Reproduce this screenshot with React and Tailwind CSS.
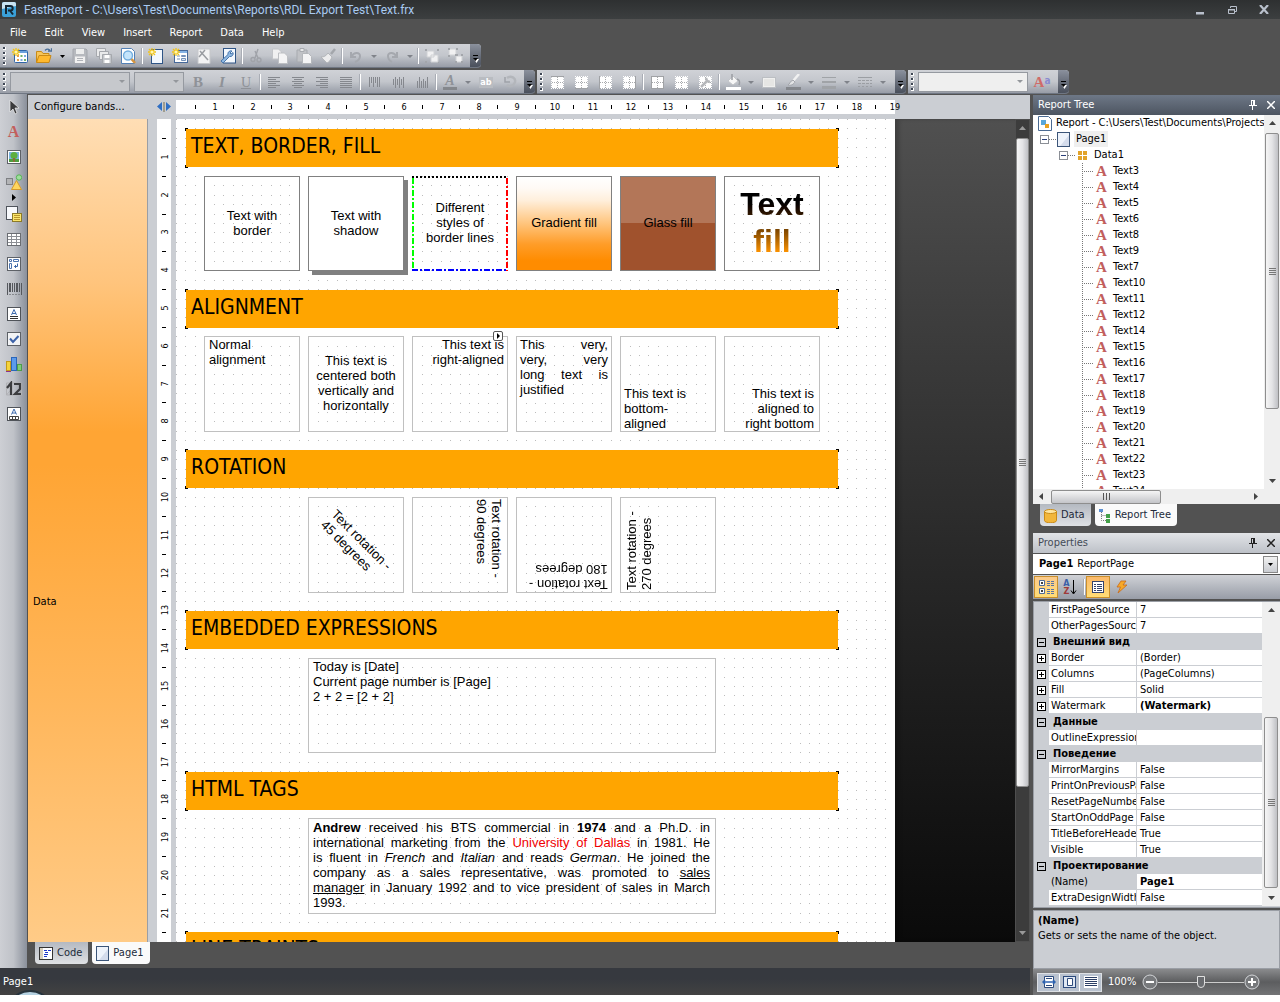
import React from "react";

const UI = "font-['DejaVu_Sans_Condensed','DejaVu_Sans',sans-serif]";

/* ---------- icons ---------- */
function Svg({ w = 16, h = 16, children, ...rest }) {
  return (
    <svg width={w} height={h} viewBox={`0 0 ${w} ${h}`} fill="none" aria-hidden="true" className="block shrink-0" {...rest}>
      {children}
    </svg>
  );
}

const Spark = () => (
  <g>
    <path d="M4 0v8M0 4h8M1 1l6 6M7 1l-6 6" stroke="#f2c419" strokeWidth="1.3" />
    <circle cx="4" cy="4" r="1.6" fill="#fff6b0" />
  </g>
);

const icons = {
  newReport: (
    <Svg>
      <rect x="2.500" y="2.500" width="13" height="12" rx="1" fill="#fff" stroke="#2f65a8" />
      <path d="M3 4h12" stroke="#6ba2dd" strokeWidth="2" />
      <path d="M5 8h2M5 12h2" stroke="#e9a04b" strokeWidth="2" />
      <path d="M8.500 8h2M12 12h2" stroke="#6fb36a" strokeWidth="2" />
      <path d="M12 8h2M8.500 12h2" stroke="#7ea9e0" strokeWidth="2" />
      <Spark />
    </Svg>
  ),
  open: (
    <Svg>
      <path d="M.5 14.500V3.500h5l1.500 2h6v3" fill="#f7c65a" stroke="#c98a16" />
      <path d="M.5 14.500l2.500-7h12l-2 7z" fill="#ffb92e" stroke="#c98a16" />
      <path d="M9 2.500c2-2 4.500-1.500 5 .5m-2 .2h3.500v-3" stroke="#4b6f98" strokeWidth="1.300" />
    </Svg>
  ),
  save: (
    <Svg>
      <path d="M1 1h13l1 1v13H1z" fill="#b6b9be" stroke="#a3a6ac" />
      <rect x="4" y="1" width="8" height="5" fill="#eceded" />
      <rect x="3" y="8.500" width="10" height="6.500" fill="#f1f1f1" />
      <path d="M5 10.500h6M5 12.500h6" stroke="#b0b3b8" />
    </Svg>
  ),
  saveAll: (
    <Svg>
      <path d="M.5.5h9v8h-9z" fill="#e9eaeb" stroke="#a5a8ad" />
      <path d="M3.500 3.500h9v8h-9z" fill="#e9eaeb" stroke="#a5a8ad" />
      <path d="M6.500 6.500h9v9h-9z" fill="#c3c6ca" stroke="#a5a8ad" />
      <path d="M8.500 7h5v3h-5zM8.500 12h5v3h-5z" fill="#fff" />
    </Svg>
  ),
  preview: (
    <Svg>
      <path d="M1.500.5h10l3 3v12h-13z" fill="#fff" stroke="#5380b5" />
      <circle cx="8" cy="7.500" r="4.500" fill="#c4e4fb" stroke="#74aede" strokeWidth="1.400" />
      <path d="M11.500 11l3.500 4" stroke="#d59541" strokeWidth="2.600" />
    </Svg>
  ),
  newPage: (
    <Svg>
      <rect x="3.500" y="1.500" width="11" height="14" fill="#f3f8fe" stroke="#2f5586" />
      <Spark />
    </Svg>
  ),
  newDialog: (
    <Svg>
      <rect x="2.500" y="2.500" width="13" height="12" fill="#fff" stroke="#46699a" />
      <path d="M3 4h12" stroke="#86b4e6" strokeWidth="2" />
      <path d="M5 8h3M5 11h3" stroke="#7592ba" />
      <path d="M9.500 7.500h4v1h-4zM9.500 10.500h4v2h-4z" fill="#dfe9f6" stroke="#7592ba" />
      <Spark />
    </Svg>
  ),
  deletePage: (
    <Svg>
      <path d="M2 1h12v14.500H2z" fill="#f3f3f4" stroke="#c5c7ca" />
      <path d="M4 3l8 9M9 2L3 9" stroke="#9a9da2" strokeWidth="1.500" />
    </Svg>
  ),
  pageSettings: (
    <Svg>
      <rect x="3.500" y=".5" width="12" height="14.500" fill="#f3f8fe" stroke="#2f5586" />
      <path d="M12 3a3 3 0 0 0-4 3.500L1 13l2 2 6.500-6.500A3 3 0 0 0 13 4.500l-2 1.500-1-1z" fill="#8fb8e2" stroke="#4a78ad" />
    </Svg>
  ),
  cut: (
    <Svg>
      <path d="M10 1L7 10M7 3l3 7" stroke="#a0a3a9" strokeWidth="1.400" />
      <circle cx="5" cy="11.500" r="2" stroke="#a0a3a9" strokeWidth="1.400" />
      <circle cx="11" cy="12" r="2" stroke="#a0a3a9" strokeWidth="1.400" />
    </Svg>
  ),
  copy: (
    <Svg>
      <path d="M.5 1h6l3 3v7h-9z" fill="#f0f0f1" stroke="#c2c4c8" />
      <path d="M6.500 5h6l3 3v7.500h-9z" fill="#f4f4f5" stroke="#bdbfc3" />
    </Svg>
  ),
  paste: (
    <Svg>
      <path d="M1 2h10v12H1z" fill="#c0c2c6" stroke="#a7aaaf" />
      <path d="M4 .5h4v3H4z" fill="#e6e7e8" stroke="#a7aaaf" />
      <path d="M6.500 5.500h6l3 3v7h-9z" fill="#f4f4f5" stroke="#b4b7bb" />
    </Svg>
  ),
  brush: (
    <Svg>
      <path d="M15 1l-4 5" stroke="#a3a6ab" strokeWidth="2.500" />
      <path d="M1 9c3 0 5-1 7-4l4 4c-1 3-3 5-5 6z" fill="#ececed" stroke="#b2b5b9" />
    </Svg>
  ),
  undo: (
    <Svg>
      <path d="M3 4v5h5M3.500 8.500C6 4 12 4 12 8c0 3-2 5-5 6" stroke="#a5a8ae" strokeWidth="2" />
    </Svg>
  ),
  redo: (
    <Svg>
      <path d="M13 4v5H8M12.500 8.500C10 4 4 4 4 8c0 3 2 5 4 6" stroke="#a5a8ae" strokeWidth="2" />
    </Svg>
  ),
  group: (
    <Svg>
      <path d="M1 2h2M13 2h2M1 14h2M13 14h2" stroke="#a3a6ab" strokeWidth="2" />
      <path d="M3 3h7v6H3zM7 7h7v7H7z" fill="#f1f1f2" stroke="#cfd1d4" />
    </Svg>
  ),
  ungroup: (
    <Svg>
      <path d="M1 1h7v6H1zM8 8h6v6H8z" fill="#f1f1f2" stroke="#cfd1d4" />
      <path d="M0 1h2M8 1h2M0 8h2M7 7h3M13 7h2M7 14h2M13 14h2" stroke="#a3a6ab" strokeWidth="2" />
    </Svg>
  ),
  rotate: (
    <Svg>
      <path d="M5 4c4-3 9 0 8 4s-5 5-8 3" stroke="#b3b6bb" strokeWidth="2.500" />
      <path d="M3 3v5h5" stroke="#9fa2a8" strokeWidth="1.500" />
    </Svg>
  ),
  bucket: (
    <Svg>
      <path d="M3 7l5-5 5 5-5 4z" fill="#f6f6f6" stroke="#c2c4c8" />
      <path d="M7 0v6M12 5c3 1 3 3 2 6" stroke="#9a9da2" strokeWidth="1.500" />
      <path d="M1 13h15v3H1z" fill="#fff" />
    </Svg>
  ),
  fillBox: (
    <Svg>
      <rect x="1.500" y="3.500" width="13" height="10" fill="#f0f0ef" stroke="#bcbfc3" />
      <path d="M3 5h10v7H3z" fill="#e6e6e4" />
    </Svg>
  ),
  pen: (
    <Svg>
      <path d="M14 0L8 7" stroke="#f1f1f1" strokeWidth="2.500" />
      <path d="M8 6l2 2c-1 2-4 4-7 3 2-1 2-4 5-5z" fill="#e2e3e5" stroke="#a3a6ab" />
      <path d="M1 13h15v3H1z" fill="#84878c" />
    </Svg>
  ),
  lineWidth: (
    <Svg shapeRendering="crispEdges">
      <path d="M1 3h14v1H1zM1 7h14v2H1zM1 12h14v3H1z" fill="#a0a3a7" />
    </Svg>
  ),
  lineStyle: (
    <Svg shapeRendering="crispEdges">
      <path d="M1 3.500h14" stroke="#9b9ea3" />
      <path d="M1 6.500h14M1 9.500h14" stroke="#9b9ea3" strokeDasharray="3 1" />
      <path d="M1 12.500h14" stroke="#9b9ea3" strokeDasharray="2 2" />
    </Svg>
  ),
};

function LinesIcon({ rows, vertical }) {
  return (
    <Svg shapeRendering="crispEdges">
      {rows.map(([a, b], i) =>
        vertical ? (
          <rect key={i} x={3 + i * 2} y={a} width="1" height={b - a} fill="#85888e" />
        ) : (
          <rect key={i} x={a} y={3 + i * 2} width={b - a} height="1" fill="#85888e" />
        )
      )}
    </Svg>
  );
}

function BorderIcon({ edge, tool }) {
  return (
    <Svg shapeRendering="crispEdges">
      <rect x="3" y="3" width="11" height="11" fill="#fff" />
      <path d="M2 2.500h13M2 14.500h13M2.500 2v13M14.500 2v13" stroke="#fff" strokeDasharray="1 1" />
      <path d="M3 8.500h11M8.500 3v11" stroke="#a9abae" strokeDasharray="1 1" />
      {edge === "top" && <path d="M2 2.500h13" stroke="#a0a2a5" />}
      {edge === "bottom" && <path d="M2 14.500h13" stroke="#a0a2a5" />}
      {edge === "left" && <path d="M2.500 2v13" stroke="#a0a2a5" />}
      {edge === "right" && <path d="M14.500 2v13" stroke="#a0a2a5" />}
      {edge === "all" && <path d="M2.500 2.500h12v12h-12z" stroke="#a0a2a5" />}
      {tool && <path d="M4 13l6-6M9 4l1 3 3 1" stroke="#b5b7ba" strokeWidth="2.500" shapeRendering="auto" />}
    </Svg>
  );
}

const RedA = ({ size = "text-[16px]" }) => (
  <span aria-hidden="true" className={`${size} font-['Liberation_Serif',serif] font-bold leading-4 text-[#c25f5d]`}>A</span>
);

const toolIcons = [
  ["Select", (
    <Svg><path d="M4 1v12l3-3 2 5 2-1-2-5h4z" fill="#3a3a3c" stroke="#f1f1f1" strokeWidth=".7" /></Svg>
  )],
  ["Text", <RedA key="a" />],
  ["Picture", (
    <Svg>
      <rect x="1.500" y="1.500" width="13" height="13" fill="#fff" stroke="#5d6167" />
      <rect x="3" y="3" width="10" height="10" fill="#7bb3e0" />
      <path d="M3 10h10v3H3z" fill="#4f9d3c" />
      <circle cx="8" cy="6.500" r="3.500" fill="#5dae3f" />
      <path d="M7 9h2v4H7z" fill="#8b6b3a" />
    </Svg>
  )],
  ["Shapes", (
    <Svg>
      <rect x=".5" y="4.500" width="6" height="6" fill="#b3b4b6" stroke="#7d7f83" />
      <circle cx="13" cy="3.500" r="2.700" fill="#9fdf9d" stroke="#57b356" />
      <path d="M10.500 6.500l5 9H5.500z" fill="#ffd65e" stroke="#d59a2a" />
    </Svg>
  )],
  null,
  ["Subreport", (
    <Svg>
      <rect x=".5" y=".5" width="11" height="13" fill="#f7f9fc" stroke="#4f545c" />
      <rect x="6.500" y="7.500" width="9" height="8" fill="#fbe66b" stroke="#8c7a28" />
      <path d="M8 9.500h6M8 11.500h6M8 13.500h6" stroke="#b9962c" />
    </Svg>
  )],
  ["Table", (
    <Svg shapeRendering="crispEdges">
      <rect x="1.500" y="2.500" width="13" height="12" fill="#fff" stroke="#6a6d72" />
      <path d="M2 5.500h12M2 8.500h12M2 11.500h12M5.500 3v11M10.500 3v11" stroke="#8c8f94" />
    </Svg>
  )],
  ["Matrix", (
    <Svg>
      <rect x="1.500" y="1.500" width="13" height="13" fill="#fff" stroke="#5d6167" />
      <path d="M3.500 3.500h2v2h-2zM7.500 3.500h5v2h-5zM3.500 7.500h2v5h-2z" stroke="#4d74ae" />
      <path d="M11.500 7.500v3h-3m0 0l1.500-1.500m-1.500 1.500l1.500 1.500" stroke="#3b66a6" />
    </Svg>
  )],
  ["Barcode", (
    <Svg shapeRendering="crispEdges">
      <path d="M1 2h1v12H1zM3 2h2v9H3zM6 2h1v9H6zM8 2h1v9H8zM10 2h2v9h-2zM13 2h1v9h-1zM15 2h1v12h-1z" fill="#55585d" />
      <path d="M3 13h11" stroke="#85888d" strokeDasharray="2 1" />
    </Svg>
  )],
  ["Rich text", (
    <Svg>
      <rect x="1.500" y="1.500" width="13" height="13" fill="#fff" stroke="#4f5359" />
      <path d="M5.500 9L8 3.500 10.500 9M6 7.500h4" stroke="#3f6cae" />
      <path d="M4 10.500h8M4 12.500h8" stroke="#333" />
    </Svg>
  )],
  ["Check box", (
    <Svg>
      <rect x="1.500" y="1.500" width="13" height="13" fill="#f2f3f5" stroke="#5d6167" />
      <path d="M4 7.500l3 3.500 5.500-6" stroke="#3c62a8" strokeWidth="2" />
    </Svg>
  )],
  ["Chart", (
    <Svg>
      <rect x=".5" y="5.500" width="4" height="9" fill="#f4d33c" stroke="#c39a18" />
      <rect x="5.500" y="1.500" width="5" height="13" fill="#5c9bea" stroke="#2a66bb" />
      <rect x="11.500" y="8.500" width="4" height="6" fill="#7fcc78" stroke="#4d9e49" />
      <path d="M0 15.500h5" stroke="#8f2f8f" />
    </Svg>
  )],
  ["Zip code", (
    <Svg>
      <path d="M.5 2h15v12H.5zM.5 14l5-6M9 2l6 6" stroke="#b0b1b5" />
      <path d="M1 7l4-5v12M8 3h6v5l-5 5h6" stroke="#3c3d40" strokeWidth="2.200" />
    </Svg>
  )],
  ["Cellular text", (
    <Svg>
      <rect x="1.500" y="1.500" width="13" height="13" fill="#fff" stroke="#4f5359" />
      <path d="M5.500 8.500L8 3l2.500 5.500M6 7h4" stroke="#3f6cae" />
      <path d="M3.500 10.500h9v3h-9zM6.500 10.500v3M9.500 10.500v3" stroke="#444" />
    </Svg>
  )],
];

/* ---------- toolbar parts ---------- */
const Tool = ({ label, children }) => (
  <button type="button" aria-label={label} className="flex h-6 w-6 shrink-0 items-center justify-center">{children}</button>
);
const Drop = ({ label, dark }) => (
  <button type="button" aria-label={label} className="flex h-6 w-3 shrink-0 items-center justify-center">
    <Svg w={dark ? 5 : 6} h={3}><path d={dark ? "M0 0h5L2.500 3z" : "M0 0h6L3 3z"} fill={dark ? "#000" : "#80838a"} /></Svg>
  </button>
);
const Sep = () => (
  <span className="flex h-6 w-1 shrink-0 items-center justify-center">
    <span className="h-4 w-px bg-[#a9adb5]" />
    <span className="h-4 w-px bg-white" />
  </span>
);
const Grip = () => (
  <span className="flex h-6 w-2 shrink-0 flex-col items-center justify-center gap-0.5">
    {[0, 1, 2, 3].map((i) => (
      <span key={i} className="h-[3px] w-[3px] border-b border-r border-white bg-[#3e4654]" />
    ))}
  </span>
);
function Bar({ children, label, tail = "ml-0.5" }) {
  return (
    <div role="toolbar" aria-label={label} className="flex h-6 shrink-0 overflow-hidden rounded-r border-b border-[#6f7682] bg-linear-to-b from-[#d0d2d7] via-[#c3c6cc] to-[#989da7]">
      <Grip />
      {children}
      <button type="button" aria-label={`${label} options`} className={`flex w-[11px] shrink-0 flex-col items-center justify-end gap-0.5 bg-linear-to-b from-[#8b919d] to-[#4a505c] pb-1 ${tail}`}>
        <span className="h-px w-[5px] bg-black" />
        <Svg w={6} h={5}><path d="M1 1h5L3.500 5z" fill="#fff" /><path d="M0 0h5L2.500 3z" fill="#000" /></Svg>
      </button>
    </div>
  );
}
function Combo({ label, width, light }) {
  return (
    <span className={`relative mx-0.5 mt-0.5 block h-5 shrink-0 ${width}`}>
      <select aria-label={label} disabled className={`block h-5 w-full appearance-none border border-[#9599a0] ${light ? "bg-[#efefef]" : "bg-[#c6c8cc]"}`}>
        <option></option>
      </select>
      <span className="pointer-events-none absolute right-[5px] top-2"><Svg w={6} h={3}><path d="M0 0h6L3 3z" fill="#94979c" /></Svg></span>
    </span>
  );
}

/* ---------- rulers and grid ---------- */
const CM = 37.8;
function Ruler({ vertical, count }) {
  const len = vertical ? 815 : 719;
  const items = [];
  for (let i = 0; i <= count; i++) {
    const t = Math.round(i * CM + CM / 2);
    const n = Math.round(i * CM);
    if (t < len)
      items.push(
        vertical ? <path key={`t${i}`} d={`M5 ${t}.5h4`} stroke="#000" /> : <path key={`t${i}`} d={`M${t}.5 5v4`} stroke="#000" />
      );
    if (i > 0)
      items.push(
        <text key={`n${i}`} fontSize="9" fill="#000" textAnchor="middle" transform={vertical ? `translate(11 ${n}) rotate(-90)` : `translate(${n + 1} 10)`}>{i}</text>
      );
  }
  return (
    <svg width={vertical ? 14 : len} height={vertical ? len : 14} className={`block overflow-visible ${UI}`} aria-hidden="true">
      {items}
    </svg>
  );
}
function DotGrid() {
  let d = "";
  for (let r = 0; r < 90; r++)
    for (let c = 0; c < 77; c++) {
      const x = Math.round(c * 9.45);
      if (x < 718) d += `M${x} ${Math.round(r * 9.45)}h1v1h-1z`;
    }
  return (
    <svg width="719" height="850" shapeRendering="crispEdges" className="absolute left-0 top-0 block" aria-hidden="true">
      <path d={d} fill="#bcbcbc" />
    </svg>
  );
}

/* ---------- report page ---------- */
function Band({ top, children }) {
  return (
    <div className={`absolute left-[10px] h-[38px] w-[652px] bg-[#ffa500] ${top}`}>
      <h2 className={`px-[5px] pt-[3px] text-[21px] leading-7 text-black ${UI}`}>{children}</h2>
      <span className="absolute -left-px -top-px h-[3px] w-[3px] border-l border-t border-black" />
      <span className="absolute -right-px -top-px h-[3px] w-[3px] border-r border-t border-black" />
      <span className="absolute -bottom-px -left-px h-[3px] w-[3px] border-b border-l border-black" />
      <span className="absolute -bottom-px -right-px h-[3px] w-[3px] border-b border-r border-black" />
    </div>
  );
}
function Box({ at, dark, className = "", children }) {
  return (
    <div className={`absolute flex w-24 border px-[3px] ${dark ? "h-[95px] border-[#808080]" : "h-24 border-[#c0c0c0]"} ${at} ${className}`}>{children}</div>
  );
}
const J = ({ children }) => <span className="block [text-align-last:justify]">{children}</span>;

function Page() {
  const mid = "items-center justify-center text-center pb-0.5";
  return (
    <div className="relative w-[719px] shrink-0 self-stretch overflow-hidden bg-white font-['Liberation_Sans',sans-serif] text-[13px] leading-[15px] text-black">
      <DotGrid />
      <Band top="top-[10px]">TEXT, BORDER, FILL</Band>
      <Box dark at="left-[28px] top-[57px]" className={mid}>Text with<br />border</Box>
      <Box dark at="left-[132px] top-[57px]" className={`${mid} bg-white shadow-[4px_4px_0_#808080]`}>
        Text with<br />shadow
      </Box>
      <div className={`absolute left-[236px] top-[57px] flex h-[95px] w-24 ${mid}`}>
        <svg width="96" height="96" className="absolute left-0 top-0" aria-hidden="true">
          <path d="M0 0h96" stroke="#000" strokeWidth="4" strokeDasharray="2 2" />
          <path d="M1 2v93" stroke="#0f0" strokeWidth="2" strokeDasharray="6 2 2 2" />
          <path d="M95 2v93" stroke="#f00" strokeWidth="2" strokeDasharray="6 2 2 2" />
          <path d="M0 94h96" stroke="#00f" strokeWidth="2" strokeDasharray="6 2 2 2" />
        </svg>
        <span>Different<br />styles of<br />border lines</span>
      </div>
      <Box dark at="left-[340px] top-[57px]" className={`${mid} bg-[linear-gradient(#fff_0%,#fffaf5_12%,#ffefdc_25%,#ffc884_48%,#ff9d29_72%,#ff8c00_90%)]`}>Gradient fill</Box>
      <Box dark at="left-[444px] top-[57px]" className={`${mid} bg-[linear-gradient(#b37658_49%,#a0522d_49%)]`}>Glass fill</Box>
      <Box dark at="left-[548px] top-[57px]" className={mid}>
        <span className="bg-linear-to-b from-black from-15% to-[#ff9400] to-90% bg-clip-text text-[32px] font-bold leading-[37px] text-transparent">Text<br />fill</span>
      </Box>

      <Band top="top-[171px]">ALIGNMENT</Band>
      <Box at="left-[28px] top-[217px]" className="pl-1">Normal<br />alignment</Box>
      <Box at="left-[132px] top-[217px]" className={mid}>This text is<br />centered both<br />vertically and<br />horizontally</Box>
      <Box at="left-[236px] top-[217px]" className="justify-end text-right">This text is<br />right-aligned</Box>
      <button type="button" aria-label="Smart tag" className="absolute left-[317px] top-[212px] flex h-[10px] w-[10px] items-center justify-center rounded-xs border border-[#555] bg-white">
        <Svg w={3} h={6}><path d="M0 0v6l3-3z" fill="#000" /></Svg>
      </button>
      <Box at="left-[340px] top-[217px]">
        <span className="block w-full"><J>This very,</J><J>very, very</J><J>long text is</J>justified</span>
      </Box>
      <Box at="left-[444px] top-[217px]" className="items-end">This text is<br />bottom-<br />aligned</Box>
      <Box at="left-[548px] top-[217px]" className="items-end justify-end pr-[5px] text-right">This text is<br />aligned to<br />right bottom</Box>

      <Band top="top-[331px]">ROTATION</Band>
      <Box at="left-[132px] top-[378px]" className="items-center justify-center"><span className="rotate-45 whitespace-nowrap">Text rotation -<br />45 degrees</span></Box>
      <Box at="left-[236px] top-[378px]"><span className="w-full whitespace-nowrap pt-px [writing-mode:vertical-rl]">Text rotation -<br />90 degrees</span></Box>
      <Box at="left-[340px] top-[378px]" className="items-end justify-end"><span className="rotate-180 whitespace-nowrap">Text rotation -<br />180 degrees</span></Box>
      <Box at="left-[444px] top-[378px]"><span className="rotate-180 whitespace-nowrap pt-0.5 [writing-mode:vertical-rl]">Text rotation -<br />270 degrees</span></Box>

      <Band top="top-[492px]">EMBEDDED EXPRESSIONS</Band>
      <div className="absolute left-[132px] top-[539px] h-[95px] w-[408px] border border-[#c0c0c0] px-1">
        Today is [Date]<br />Current page number is [Page]<br />2 + 2 = [2 + 2]
      </div>

      <Band top="top-[653px]">HTML TAGS</Band>
      <div className="absolute left-[132px] top-[699px] h-24 w-[408px] border border-[#c0c0c0] px-1 pr-[5px] pt-px">
        <J><b>Andrew</b> received his BTS commercial in <b>1974</b> and a Ph.D. in</J>
        <J>international marketing from the <span className="text-[#f00000]">University of Dallas</span> in 1981. He</J>
        <J>is fluent in <i>French</i> and <i>Italian</i> and reads <i>German</i>. He joined the</J>
        <J>company as a sales representative, was promoted to <u>sales</u></J>
        <J><u>manager</u> in January 1992 and to vice president of sales in March</J>
        1993.
      </div>

      <Band top="top-[813px]">LINE TRAINTS</Band>
    </div>
  );
}

/* ---------- right-hand panels ---------- */
const PinClose = ({ dark }) => {
  const c = dark ? "#222" : "#fff";
  return (
    <span className="ml-auto flex items-center gap-2.5 pr-[5px]">
      <button type="button" aria-label="Pin panel"><Svg w={8} h={10}><path d="M2 .5h4M2.500 0v5M5.500 0v5M4.500 0v5M0 5.500h8M3.500 6v4" stroke={c} /></Svg></button>
      <button type="button" aria-label="Close panel"><Svg w={8} h={8}><path d="M0 0l8 8M8 0L0 8" stroke={c} strokeWidth="1.500" /></Svg></button>
    </span>
  );
};
const Arrow = ({ dir, color = "#444" }) => {
  const d = { up: "M0 4h7L3.500 0z", down: "M0 0h7L3.500 4z", left: "M4 0v7L0 3.500z", right: "M0 0v7l4-3.500z" }[dir];
  const v = dir === "up" || dir === "down";
  return <Svg w={v ? 7 : 4} h={v ? 4 : 7}><path d={d} fill={color} /></Svg>;
};
const VThumb = ({ className }) => (
  <div className={`flex flex-col items-center justify-center gap-px rounded-xs border border-[#8e8e8e] bg-linear-to-r from-[#f5f5f5] via-[#e4e4e6] to-[#bfc0c4] ${className}`}>
    {[0, 1, 2, 3].map((i) => <span key={i} className="h-px w-[7px] bg-[#777]" />)}
  </div>
);
const Minus = () => <Svg w={9} h={9} shapeRendering="crispEdges"><rect x=".5" y=".5" width="8" height="8" fill="#fff" stroke="#8b8f96" /><path d="M2 4.500h5" stroke="#2a3f7a" /></Svg>;
const HDots = ({ w }) => <Svg w={w} h={16} shapeRendering="crispEdges"><path d={`M0 8.500h${w}`} stroke="#777" strokeDasharray="1 1" /></Svg>;
const PageIcon = () => <Svg w={13} h={15}><rect x=".5" y=".5" width="12" height="14" fill="#eef3fb" stroke="#3b5579" /><path d="M4 13L12 3v11H3z" fill="#d4dcec" /></Svg>;

const textNames = ["Text3", "Text4", "Text5", "Text6", "Text8", "Text9", "Text7", "Text10", "Text11", "Text12", "Text14", "Text15", "Text16", "Text17", "Text18", "Text19", "Text20", "Text21", "Text22", "Text23", "Text24"];

function ReportTree() {
  return (
    <section className="flex min-h-0 flex-1 flex-col">
      <header className="flex h-5 shrink-0 items-center bg-linear-to-b from-[#6e7887] to-[#4d5561] pl-[5px] text-white"><h2>Report Tree</h2><PinClose /></header>
      <div className="flex min-h-0 flex-1 bg-white">
        <ul className="min-w-0 flex-1 overflow-hidden whitespace-nowrap leading-4">
          <li className="flex h-4 items-center gap-1 pl-[5px]">
            <Svg w={14} h={15}><path d="M.5.5h10l3 3v11H.5z" fill="#fff" stroke="#4a6a92" /><path d="M3 4h5v5H3z" fill="#5aa7d8" /><path d="M7 8h4v4H7z" fill="#eba21e" /></Svg>
            Report - C:\Users\Test\Documents\Projects
          </li>
          <li className="flex h-4 items-center pl-[7px]"><Minus /><HDots w={8} /><PageIcon /><span className="ml-1 bg-[#efefef] px-0.5">Page1</span></li>
          <li className="flex h-4 items-center pl-[26px]"><Minus /><HDots w={8} />
            <Svg w={12} h={12}><path d="M2 2h4v4H2zM7 2h4v4H7zM2 7h4v4H2zM7 7h4v4H7z" fill="#e2a32a" /></Svg><span className="ml-1.5">Data1</span></li>
          {textNames.map((n) => (
            <li key={n} className="flex h-4 items-center pl-[49px]">
              <Svg w={12} h={16} shapeRendering="crispEdges"><path d="M.5 0v16M0 8.500h12" stroke="#777" strokeDasharray="1 1" /></Svg>
              <span className="ml-0.5 flex w-[11px] justify-center"><RedA size="text-[15px]" /></span>
              <span className="ml-1.5">{n}</span>
            </li>
          ))}
        </ul>
        <div className="flex w-4 shrink-0 flex-col items-center bg-[#efefef] py-1.5">
          <Arrow dir="up" />
          <VThumb className="mt-2 h-[276px] w-3.5" />
          <span className="mt-auto"><Arrow dir="down" /></span>
        </div>
      </div>
      <div className="flex h-[15px] shrink-0 items-center bg-[#efefef] pl-1.5 pr-[22px]">
        <Arrow dir="left" />
        <div className="ml-2 flex h-3.5 w-[110px] items-center justify-center gap-0.5 rounded-xs border border-[#8e8e8e] bg-linear-to-b from-[#f5f5f5] to-[#c4c5c9]">
          {[0, 1, 2].map((i) => <span key={i} className="h-[7px] w-px bg-[#555]" />)}
        </div>
        <span className="ml-auto"><Arrow dir="right" /></span>
      </div>
      <div role="tablist" className="flex h-[29px] shrink-0 items-start gap-1 pl-[7px]">
        <Tab><Svg w={13} h={14}><path d="M.5 2.500v9c0 3 12 3 12 0v-9z" fill="#f2b63a" stroke="#c98a16" /><ellipse cx="6.500" cy="2.500" rx="6" ry="2" fill="#ffe6a0" stroke="#c98a16" /></Svg>Data</Tab>
        <Tab active><Svg w={12} h={15}><path d="M2.500 4v8.500H7M2.500 7.500H7" stroke="#777" strokeDasharray="1 1" /><path d="M0 1h4v3H0z" fill="#5b8fd0" /><path d="M7 6h4v4H7zM7 11h4v4H7z" fill="#43a047" /></Svg>Report Tree</Tab>
      </div>
    </section>
  );
}
function Tab({ active, children }) {
  return (
    <button type="button" role="tab" aria-selected={!!active} className={`flex h-[22px] items-center gap-1 rounded-b-sm pl-1 pr-1.5 pt-px text-[#222a3a] ${active ? "bg-[#fafafa]" : "bg-linear-to-b from-[#b4b9c1] to-[#dfe1e4]"}`}>{children}</button>
  );
}

const props = [
  ["p", "FirstPageSource", "7"], ["p", "OtherPagesSource", "7"],
  ["c", "Внешний вид"],
  ["+", "Border", "(Border)"], ["+", "Columns", "(PageColumns)"], ["+", "Fill", "Solid"], ["+", "Watermark", "(Watermark)", true],
  ["c", "Данные"], ["p", "OutlineExpression", ""],
  ["c", "Поведение"],
  ["p", "MirrorMargins", "False"], ["p", "PrintOnPreviousPage", "False"], ["p", "ResetPageNumber", "False"],
  ["p", "StartOnOddPage", "False"], ["p", "TitleBeforeHeader", "True"], ["p", "Visible", "True"],
  ["c", "Проектирование"],
  ["s", "(Name)", "Page1", true], ["p", "ExtraDesignWidth", "False"],
];
const Sign = ({ plus }) => (
  <Svg w={9} h={9} shapeRendering="crispEdges"><rect x=".5" y=".5" width="8" height="8" stroke="#000" fill={plus ? "#fff" : "none"} /><path d={plus ? "M2 4.500h5M4.500 2v5" : "M2 4.500h5"} stroke="#000" /></Svg>
);

function Properties() {
  return (
    <section className="flex shrink-0 flex-col">
      <header className="flex h-5 items-center bg-linear-to-b from-[#e2e4e7] to-[#bdc1c8] pl-[5px] text-[#444b57]"><h2>Properties</h2><PinClose dark /></header>
      <div className="relative mt-px flex h-5 items-center bg-white pl-[6px] text-black">
        <span className="mr-1 font-bold">Page1</span> ReportPage
        <button type="button" aria-label="Choose object" className="ml-auto mr-0.5 flex h-[17px] w-[15px] items-center justify-center border border-[#888] bg-linear-to-b from-[#f2f2f2] to-[#c9ccd1]"><Svg w={5} h={3}><path d="M0 0h5L2.500 3z" fill="#000" /></Svg></button>
      </div>
      <div className="mt-px flex h-6 items-center bg-linear-to-b from-[#d0d2d7] to-[#989da7] px-px">
        <button type="button" aria-label="Categorized" className="flex h-[22px] w-6 items-center justify-center border border-[#c98f2c] bg-linear-to-b from-[#fbc98a] to-[#ffdd76]">
          <Svg><path d="M1.500 1.500h5v5h-5zM1.500 9.500h5v5h-5z" fill="#fff" stroke="#4f6b96" /><path d="M3 4h2M4 3v2M3 12h2M4 11v2" stroke="#000" /><path d="M9 2.500h7M9 4.500h7M9 6.500h7M9 10.500h7M9 12.500h7M9 14.500h7" stroke="#5874a5" strokeDasharray="3 1" /></Svg>
        </button>
        <button type="button" aria-label="Alphabetical" className="flex h-6 w-6 items-center justify-center">
          <span className="flex flex-col text-[9px] font-bold leading-[8px]"><span className="text-[#3b5fa8]">A</span><span className="text-[#a03a3a]">Z</span></span>
          <Svg w={7} h={15}><path d="M3.500 0v13M1 10.500l2.500 3.500L6 10.500" stroke="#000" /></Svg>
        </button>
        <Sep />
        <button type="button" aria-label="Property page" className="flex h-[22px] w-6 items-center justify-center border border-[#c98f2c] bg-linear-to-b from-[#fbb96b] to-[#ffdd76]">
          <Svg><rect x="2.500" y="2.500" width="11" height="11" fill="#fff" stroke="#34436b" /><path d="M4 5.500h2M7 5.500h5M4 7.500h2M7 7.500h5M4 9.500h2M7 9.500h5M4 11.500h2M7 11.500h5" stroke="#34436b" /></Svg>
        </button>
        <button type="button" aria-label="Events" className="flex h-6 w-6 items-center justify-center">
          <Svg><path d="M7 2h5L9 6h4L4 14l2.500-6H3z" fill="#f7a928" stroke="#c86a1c" strokeWidth=".8" /></Svg>
        </button>
      </div>
      <div className="mt-0.5 flex border border-r-0 border-[#9a9ea5] bg-[#cbced3] pl-px pb-px">
        <table className="block min-w-0 flex-1 text-black">
          <tbody className="block w-full">
            {props.map(([k, n, v, b]) => (
              <tr key={n} className="flex h-4 leading-[15px]">
                <td className="flex w-[14px] shrink-0 items-center pl-0.5">{(k === "c" || k === "+") && <Sign plus={k === "+"} />}</td>
                {k === "c" ? (
                  <th colSpan="2" className="flex-1 pl-1 text-left font-bold">{n}</th>
                ) : (
                  <>
                    <th className={`w-[88px] shrink-0 overflow-hidden border-b border-r border-[#cbced3] pl-0.5 text-left font-normal whitespace-nowrap ${k === "s" ? "bg-[#cbced3]" : "bg-white"}`}>{n}</th>
                    <td className={`min-w-0 flex-1 border-b border-[#cbced3] bg-white pl-[3px] ${b ? "font-bold" : ""}`}>{v}</td>
                  </>
                )}
              </tr>
            ))}
          </tbody>
        </table>
        <div className="flex w-[18px] shrink-0 flex-col items-center bg-[#efefef] py-1.5">
          <Arrow dir="up" />
          <VThumb className="mt-auto h-[171px] w-3.5" />
          <span className="mt-2"><Arrow dir="down" /></span>
        </div>
      </div>
      <div className="mt-0.5 h-[59px] border border-[#9a9ea5] bg-[#cbced3] pl-1 pt-0.5 leading-[15px] text-black"><b>(Name)</b><br />Gets or sets the name of the object.</div>
    </section>
  );
}

const winBtn = "flex h-4 w-4 items-center justify-center";

export default function App() {
  return (
    <div className={`flex h-screen flex-col bg-white pb-[7px] text-[11px] ${UI}`}>
      <div className="flex min-h-0 flex-1 flex-col overflow-hidden bg-[#525252]">
        <header className="flex h-[19px] shrink-0 items-center bg-linear-to-b from-[#2e3031] to-[#3c3f40] pl-0.5 pr-2 text-[#a9cbf2]">
          <Svg w={14} h={15}><rect width="14" height="15" rx="2" fill="#3aa0d8" /><path d="M0 7V2a2 2 0 0 1 2-2h10a2 2 0 0 1 2 2v2z" fill="#c9e3f2" /><path d="M4 12V4h4.500a2.200 2.200 0 0 1 0 4.400H6M8 8.500l3 4" stroke="#142633" strokeWidth="2" /></Svg>
          <h1 className="ml-2 font-[Roboto,sans-serif] text-[12px] leading-[18px]">FastReport - C:\Users\Test\Documents\Reports\RDL Export Test\Text.frx</h1>
          <div className="ml-auto flex gap-4">
            <button type="button" aria-label="Minimize" className={winBtn}><Svg w={8} h={10}><path d="M0 7h8v2.500H0z" fill="#b9c0cc" /></Svg></button>
            <button type="button" aria-label="Restore" className={winBtn}><Svg w={9} h={8}><path d="M2.500 2V.5h6v5H7M.5 3.500h6v4h-6z" stroke="#b9c0cc" /><path d="M0 3h7v1.500H0z" fill="#b9c0cc" /></Svg></button>
            <button type="button" aria-label="Close" className={winBtn}><Svg w={10} h={9}><path d="M1 0l8 9M9 0L1 9" stroke="#b9c0cc" strokeWidth="2.200" /></Svg></button>
          </div>
        </header>

        <nav aria-label="Main menu" className="flex h-[25px] shrink-0 items-center gap-[18px] px-2.5 pt-[3px] text-white">
          {["File", "Edit", "View", "Insert", "Report", "Data", "Help"].map((m) => <button key={m} type="button">{m}</button>)}
        </nav>

        <div className="flex shrink-0">
          <Bar label="Standard">
            <Tool label="New report">{icons.newReport}</Tool>
            <Tool label="Open">{icons.open}</Tool>
            <Drop dark label="Recent files" />
            <Tool label="Save">{icons.save}</Tool>
            <Tool label="Save all">{icons.saveAll}</Tool>
            <Tool label="Preview">{icons.preview}</Tool>
            <Sep />
            <Tool label="New page">{icons.newPage}</Tool>
            <Tool label="New dialog">{icons.newDialog}</Tool>
            <Tool label="Delete page">{icons.deletePage}</Tool>
            <Tool label="Page settings">{icons.pageSettings}</Tool>
            <Sep />
            <Tool label="Cut">{icons.cut}</Tool>
            <Tool label="Copy">{icons.copy}</Tool>
            <Tool label="Paste">{icons.paste}</Tool>
            <Tool label="Format painter">{icons.brush}</Tool>
            <Sep />
            <Tool label="Undo">{icons.undo}</Tool>
            <Drop label="Undo list" />
            <Tool label="Redo">{icons.redo}</Tool>
            <Drop label="Redo list" />
            <Sep />
            <Tool label="Group">{icons.group}</Tool>
            <Tool label="Ungroup">{icons.ungroup}</Tool>
          </Bar>
        </div>
        <div className="mt-0.5 flex shrink-0 gap-0.5">
          <Bar label="Text">
            <Combo label="Font name" width="w-[120px]" />
            <Combo label="Font size" width="w-[50px]" />
            <Tool label="Bold"><span className="font-['Liberation_Serif',serif] text-[15px] font-bold text-[#8f9298]">B</span></Tool>
            <Tool label="Italic"><span className="font-['Liberation_Serif',serif] text-[15px] font-bold italic text-[#8f9298]">I</span></Tool>
            <Tool label="Underline"><span className="font-['Liberation_Serif',serif] text-[14px] text-[#8f9298] underline">U</span></Tool>
            <Sep />
            <Tool label="Align left"><LinesIcon rows={[[2, 14], [2, 10], [2, 14], [2, 10], [2, 14], [2, 10]]} /></Tool>
            <Tool label="Align center"><LinesIcon rows={[[2, 14], [4, 12], [2, 14], [4, 12], [2, 14], [4, 12]]} /></Tool>
            <Tool label="Align right"><LinesIcon rows={[[2, 14], [6, 14], [2, 14], [6, 14], [2, 14], [6, 14]]} /></Tool>
            <Tool label="Justify"><LinesIcon rows={[[2, 14], [2, 14], [2, 14], [2, 14], [2, 14], [2, 14]]} /></Tool>
            <Sep />
            <Tool label="Align top"><LinesIcon vertical rows={[[3, 13], [3, 9], [3, 13], [3, 9], [3, 13], [3, 13]]} /></Tool>
            <Tool label="Align middle"><LinesIcon vertical rows={[[5, 11], [3, 14], [5, 11], [3, 14], [5, 11], [3, 14]]} /></Tool>
            <Tool label="Align bottom"><LinesIcon vertical rows={[[7, 14], [3, 14], [7, 14], [5, 14], [7, 14], [3, 14]]} /></Tool>
            <Sep />
            <Tool label="Text color"><span className="border-b-[3px] border-[#84878c] px-0.5 font-['Liberation_Serif',serif] text-[14px] font-bold italic leading-3 text-[#8f9298]">A</span></Tool>
            <Drop label="Text color list" />
            <Tool label="Highlight"><span className="bg-[#b9bcc1] px-px text-[9px] font-bold leading-[11px] text-white">ab</span></Tool>
            <Tool label="Rotation">{icons.rotate}</Tool>
          </Bar>
          <Bar label="Border and fill" tail="ml-1.5">
            <Tool label="Top line"><BorderIcon edge="top" /></Tool>
            <Tool label="Bottom line"><BorderIcon edge="bottom" /></Tool>
            <Tool label="Left line"><BorderIcon edge="left" /></Tool>
            <Tool label="Right line"><BorderIcon edge="right" /></Tool>
            <Sep />
            <Tool label="All lines"><BorderIcon edge="all" /></Tool>
            <Tool label="No lines"><BorderIcon /></Tool>
            <Tool label="Edit border"><BorderIcon tool /></Tool>
            <Sep />
            <Tool label="Fill color">{icons.bucket}</Tool>
            <Drop label="Fill color list" />
            <Tool label="Fill style">{icons.fillBox}</Tool>
            <Tool label="Line color">{icons.pen}</Tool>
            <Drop label="Line color list" />
            <Tool label="Line width">{icons.lineWidth}</Tool>
            <Drop label="Line width list" />
            <Tool label="Line style">{icons.lineStyle}</Tool>
            <Drop label="Line style list" />
          </Bar>
          <Bar label="Styles" tail="ml-1">
            <Combo light label="Style" width="w-[110px]" />
            <Tool label="Edit styles"><span className="font-['Liberation_Serif',serif] text-[15px] font-bold text-[#d06a68]">A</span><span className="-mt-1 text-[10px] font-bold text-[#8a8ad0]">a</span></Tool>
          </Bar>
        </div>

        <div className="flex min-h-0 flex-1">
          <div className="flex min-w-0 flex-1 flex-col">
            <div className="flex min-h-0 flex-1">
              <div role="toolbar" aria-label="Objects" className="flex w-[27px] shrink-0 flex-col bg-linear-to-r from-[#cdcfd4] via-[#bfc2c8] to-[#8a909b]">
                {toolIcons.map((t, i) =>
                  t ? (
                    <button key={t[0]} type="button" aria-label={t[0]} className="flex h-[25px] items-center justify-center">{t[1]}</button>
                  ) : (
                    <span key={i} className="flex h-[7px] items-center justify-center"><Arrow dir="right" color="#000" /></span>
                  )
                )}
              </div>
              <main className="ml-px flex min-w-0 flex-1 flex-col pt-px">
                <div className="flex h-6 shrink-0 items-center overflow-hidden bg-[#cbced3] text-black">
                  <button type="button" className="w-32 shrink-0 pl-1.5 text-left">Configure bands...</button>
                  <span className="flex w-5 shrink-0 items-center pl-px"><Svg w={14} h={10}><path d="M5 0v9L0 4.500zM9 0v9l5-4.500z" fill="#2f6fc4" /><path d="M7 0v10" stroke="#a09d8f" strokeWidth="2" /></Svg></span>
                  <div className="h-3.5 w-[719px] shrink-0 bg-white"><Ruler count={19} /></div>
                </div>
                <div className="flex min-h-0 flex-1">
                  <div className="flex w-[120px] shrink-0 flex-col justify-center border-r border-[#9a9ea5] bg-[linear-gradient(#ffdeb5_0%,#ffc47c_20%,#ffa534_38%,#ffa534_42%,#ffb65a_70%,#ffcb87_100%)] pl-[5px] pt-36 text-black">Data</div>
                  <div className="w-[28px] shrink-0 overflow-hidden bg-[#cbced3] pl-[9px]"><div className="h-full w-3.5 bg-white"><Ruler vertical count={21} /></div></div>
                  <Page />
                  <div className="min-w-0 flex-1 bg-linear-to-b from-[#505050] to-[#0a0a0a] shadow-[inset_4px_0_4px_#0003]" />
                  <div className="flex w-[15px] shrink-0 flex-col items-center border border-[#4e4e4e] bg-[#3c3c3c] py-1.5">
                    <Arrow dir="up" color="#999" />
                    <VThumb className="mt-2 h-[649px] w-[13px]" />
                    <span className="mt-auto"><Arrow dir="down" color="#999" /></span>
                  </div>
                </div>
                <div role="tablist" className="flex h-[26px] shrink-0 items-start gap-1 pl-[7px]">
                  <Tab><Svg w={14} h={13}><rect x=".5" y=".5" width="13" height="12" fill="#fff" stroke="#333" /><path d="M1 1h3v11H1z" fill="#d8d0bc" /><path d="M5 3.500h3M9 3.500h3M6 5.500h3M5 7.500h4M5 9.500h3" stroke="#2038c8" /></Svg>Code</Tab>
                  <Tab active><PageIcon />Page1</Tab>
                </div>
              </main>
            </div>
            <footer className="relative flex h-[27px] shrink-0 items-center overflow-hidden bg-linear-to-b from-[#36393f] from-40% to-[#424242] pl-[3px] pt-0.5 text-white">
              Page1
              <span className="absolute left-[6px] top-[22px] h-12 w-12 rounded-full border-2 border-[#26333d] bg-linear-to-b from-[#b8d4e4] to-[#5d90b0]" />
            </footer>
          </div>
          <aside className="ml-[3px] flex w-[247px] shrink-0 flex-col pt-px">
            <ReportTree />
            <Properties />
            <footer className="flex h-[26px] shrink-0 items-center bg-linear-to-b from-[#8a8b8d] via-[#5c5d5f] to-[#737476] px-1 text-white">
              <span className="flex border border-[#dcdfe3] bg-[#b9c2cf]">
                <button type="button" aria-label="Page width" className="flex h-[17px] w-[21px] items-center justify-center"><Svg w={14} h={12}><path d="M2.500.5h9v11h-9z" fill="#fff" stroke="#2c4a7c" /><path d="M4 2.500h6M4 9.500h6" stroke="#2c4a7c" /><path d="M1 6h12M3 4L1 6l2 2M11 4l2 2-2 2" stroke="#2c62b0" strokeWidth="1.500" /></Svg></button>
                <button type="button" aria-label="Whole page" className="flex h-[17px] w-[21px] items-center justify-center border-x border-white"><Svg w={13} h={12}><rect x=".5" y=".5" width="12" height="11" fill="#dfe7f2" stroke="#2c4a7c" /><path d="M4.500 2.500h5v7h-5z" fill="#fff" stroke="#2c4a7c" /></Svg></button>
                <button type="button" aria-label="100 percent" className="flex h-[17px] w-[21px] items-center justify-center"><Svg w={14} h={12}><path d="M0 0h14v12H0z" fill="#fff" /><path d="M1 1.500h12M1 3.500h12M1 5.500h12M1 7.500h12M1 9.500h12" stroke="#2c3f66" /></Svg></button>
              </span>
              <span className="ml-1.5 w-[34px]">100%</span>
              <button type="button" aria-label="Zoom out"><Svg><circle cx="8" cy="8" r="7" fill="#77797c" stroke="#d5d7da" /><path d="M4 8h8" stroke="#fff" strokeWidth="2" /></Svg></button>
              <input type="range" aria-label="Zoom" defaultValue="50" className="h-4 w-[86px] appearance-none bg-[linear-gradient(#ccc,#ccc)] bg-[length:100%_1px] bg-center bg-no-repeat [&::-webkit-slider-thumb]:h-3 [&::-webkit-slider-thumb]:w-2 [&::-webkit-slider-thumb]:appearance-none [&::-webkit-slider-thumb]:rounded-b [&::-webkit-slider-thumb]:border [&::-webkit-slider-thumb]:border-[#e0e0e0] [&::-webkit-slider-thumb]:bg-[#6a6c70]" />
              <button type="button" aria-label="Zoom in"><Svg><circle cx="8" cy="8" r="7" fill="#77797c" stroke="#d5d7da" /><path d="M4 8h8M8 4v8" stroke="#fff" strokeWidth="2" /></Svg></button>
            </footer>
          </aside>
        </div>
      </div>
    </div>
  );
}
